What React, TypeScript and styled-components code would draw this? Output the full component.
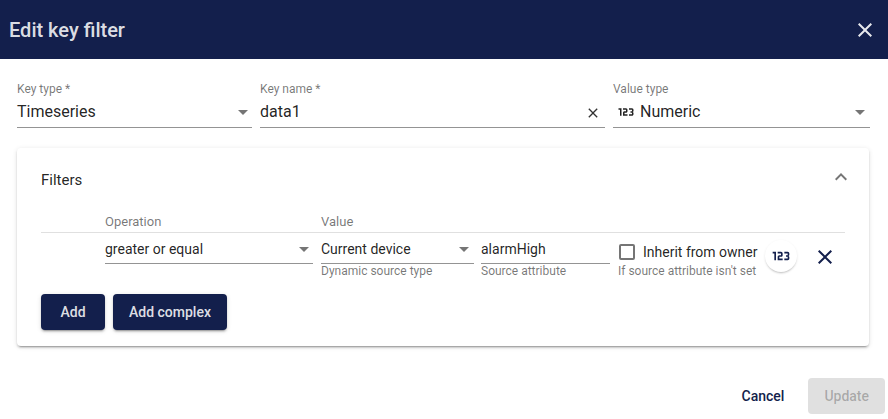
import React from "react";
import styled, { createGlobalStyle } from "styled-components";
import { MdArrowDropDown, MdClose, MdExpandLess } from "react-icons/md";

const navy = "#131f4c";

const GlobalStyle = createGlobalStyle`
  html, body {
    margin: 0;
    padding: 0;
    background: #fff;
    overflow: hidden;
  }
  body {
    font-family: Roboto, "Liberation Sans", sans-serif;
    color: rgba(0, 0, 0, 0.87);
  }
`;

const Dialog = styled.div`
  width: 888px;
  height: 419px;
  display: flex;
  flex-direction: column;
`;

const Header = styled.header`
  height: 59px;
  flex: none;
  background: ${navy};
  color: rgba(255, 255, 255, 0.87);
  display: flex;
  align-items: center;
  justify-content: space-between;
  padding: 0 11px 0 9px;
  font-size: 20px;
  font-weight: 500;
  svg {
    font-size: 24px;
    display: block;
    color: rgba(255, 255, 255, 0.9);
  }
`;

const TopFields = styled.div`
  display: grid;
  grid-template-columns: 235px 345px 257px;
  column-gap: 8px;
  padding: 23px 0 0 17px;
`;

const Field = styled.div`
  display: flex;
  flex-direction: column;
  min-width: 0;
`;

const TopLabel = styled.div`
  font-size: 12px;
  line-height: 14px;
  padding-bottom: 1px;
  color: rgba(0, 0, 0, 0.54);
`;

const TopControl = styled.div`
  height: 29px;
  padding-bottom: 1px;
  display: flex;
  align-items: center;
  border-bottom: 1px solid rgba(0, 0, 0, 0.42);
  font-size: 16px;
`;

const Grow = styled.span`
  flex: 1;
  min-width: 0;
  white-space: nowrap;
`;

const Caret = styled(MdArrowDropDown)<{ $inset?: number }>`
  flex: none;
  font-size: 24px;
  color: rgba(0, 0, 0, 0.54);
  margin-right: ${({ $inset }) => $inset ?? -3}px;
`;

const Clear = styled(MdClose)`
  flex: none;
  font-size: 16px;
  margin-right: 4px;
  margin-top: 2px;
  color: rgba(0, 0, 0, 0.8);
`;

const NumericGlyph = styled.svg<{ $size: number }>`
  flex: none;
  display: block;
  width: ${({ $size }) => $size}px;
  height: ${({ $size }) => $size}px;
  fill: currentColor;
`;

const NumericIcon = ({ size }: { size: number }) => (
  <NumericGlyph $size={size} viewBox="0 0 24 24">
    <path d="M4,17V9H2V7H6V17H4M22,15C22,16.11 21.1,17 20,17H16V15H20V13H18V11H20V9H16V7H20A2,2 0 0,1 22,9V10.5A1.5,1.5 0 0,1 20.5,12A1.5,1.5 0 0,1 22,13.5V15M14,15V17H8V13C8,11.89 8.9,11 10,11H12V9H8V7H12A2,2 0 0,1 14,9V11C14,12.11 13.1,13 12,13H10V15H14Z" />
  </NumericGlyph>
);

const ValueTypePrefix = styled.span`
  flex: none;
  margin: 0 5px 0 4px;
`;

const Card = styled.section`
  width: 852px;
  height: 198px;
  flex: none;
  box-sizing: border-box;
  margin: 20px 0 0 17px;
  padding: 0 24px;
  background: #fff;
  border-radius: 4px;
  box-shadow: 0 3px 1px -2px rgba(0, 0, 0, 0.2), 0 2px 2px 0 rgba(0, 0, 0, 0.14),
    0 1px 5px 0 rgba(0, 0, 0, 0.12);
  display: flex;
  flex-direction: column;
`;

const CardHead = styled.div`
  height: 64px;
  flex: none;
  display: flex;
  align-items: center;
  justify-content: space-between;
  font-size: 15px;
  svg {
    font-size: 24px;
    color: rgba(0, 0, 0, 0.54);
    margin: -6px -8px 0 0;
  }
`;

const FilterColumns = styled.div`
  display: grid;
  grid-template-columns: 208px 153px;
  column-gap: 8px;
  height: 21px;
  flex: none;
  width: 804px;
  box-sizing: border-box;
  padding-left: 64px;
  border-bottom: 1px solid rgba(0, 0, 0, 0.12);
  font-size: 13px;
  line-height: 20px;
  color: rgba(0, 0, 0, 0.54);
`;

const FilterRow = styled.div`
  display: flex;
  width: 804px;
  height: 61px;
  flex: none;
  box-sizing: border-box;
  padding-left: 64px;
  font-size: 14px;
`;

const RowField = styled.div<{ $width: number; $gap: number }>`
  width: ${({ $width }) => $width}px;
  margin-right: ${({ $gap }) => $gap}px;
  flex: none;
`;

const RowControl = styled.div`
  height: 28px;
  padding-top: 2px;
  display: flex;
  align-items: center;
  border-bottom: 1px solid rgba(0, 0, 0, 0.42);
`;

const Hint = styled.div`
  font-size: 12px;
  line-height: 14px;
  color: rgba(0, 0, 0, 0.54);
  white-space: nowrap;
`;

const InheritBox = styled.div`
  width: 147px;
  flex: none;
`;

const CheckLine = styled.div`
  height: 31px;
  display: flex;
  align-items: center;
  padding: 7px 0 0 1px;
  box-sizing: border-box;
  gap: 8px;
  white-space: nowrap;
`;

const CheckBox = styled.span`
  width: 16px;
  height: 16px;
  box-sizing: border-box;
  border: 2px solid rgba(0, 0, 0, 0.54);
  border-radius: 2px;
  flex: none;
`;

const TypeFab = styled.div`
  width: 32px;
  height: 32px;
  flex: none;
  margin: 7px 0 0 0;
  border-radius: 50%;
  background: #fff;
  color: ${navy};
  display: flex;
  align-items: center;
  justify-content: center;
  box-shadow: 0 2px 2px -1px rgba(0, 0, 0, 0.2), 0 1px 3px 0 rgba(0, 0, 0, 0.08);
`;

const Remove = styled(MdClose)`
  flex: none;
  font-size: 24px;
  color: ${navy};
  margin: 12px 0 0 16px;
`;

const Actions = styled.div`
  display: flex;
  gap: 8px;
`;

const Raised = styled.button`
  height: 36px;
  min-width: 64px;
  padding: 0 16px;
  border: none;
  border-radius: 4px;
  background: ${navy};
  color: rgba(255, 255, 255, 0.87);
  font: 500 14px Roboto, sans-serif;
  box-shadow: 0 3px 1px -2px rgba(0, 0, 0, 0.2), 0 2px 2px 0 rgba(0, 0, 0, 0.14),
    0 1px 5px 0 rgba(0, 0, 0, 0.12);
`;

const Footer = styled.footer`
  display: flex;
  justify-content: flex-end;
  align-items: center;
  gap: 8px;
  padding: 32px 3px 0 0;
`;

const FlatButton = styled.button<{ $disabled?: boolean }>`
  height: 36px;
  padding: 0 16px;
  border: none;
  border-radius: 4px;
  background: ${({ $disabled }) => ($disabled ? "#e0e0e0" : "transparent")};
  color: ${({ $disabled }) => ($disabled ? "rgba(0, 0, 0, 0.26)" : navy)};
  font: 500 14px Roboto, sans-serif;
`;

export default function App() {
  return (
    <>
      <GlobalStyle />
      <Dialog>
        <Header>
          <span>Edit key filter</span>
          <MdClose />
        </Header>
        <TopFields>
          <Field>
            <TopLabel>Key type *</TopLabel>
            <TopControl>
              <Grow>Timeseries</Grow>
              <Caret />
            </TopControl>
          </Field>
          <Field>
            <TopLabel>Key name *</TopLabel>
            <TopControl>
              <Grow>data1</Grow>
              <Clear />
            </TopControl>
          </Field>
          <Field>
            <TopLabel>Value type</TopLabel>
            <TopControl>
              <ValueTypePrefix>
                <NumericIcon size={18} />
              </ValueTypePrefix>
              <Grow>Numeric</Grow>
              <Caret $inset={-2} />
            </TopControl>
          </Field>
        </TopFields>
        <Card>
          <CardHead>
            <span>Filters</span>
            <MdExpandLess />
          </CardHead>
          <FilterColumns>
            <span>Operation</span>
            <span>Value</span>
          </FilterColumns>
          <FilterRow>
            <RowField $width={208} $gap={8}>
              <RowControl>
                <Grow>greater or equal</Grow>
                <Caret />
              </RowControl>
            </RowField>
            <RowField $width={153} $gap={7}>
              <RowControl>
                <Grow>Current device</Grow>
                <Caret $inset={-2} />
              </RowControl>
              <Hint>Dynamic source type</Hint>
            </RowField>
            <RowField $width={129} $gap={8}>
              <RowControl>
                <Grow>alarmHigh</Grow>
              </RowControl>
              <Hint>Source attribute</Hint>
            </RowField>
            <InheritBox>
              <CheckLine>
                <CheckBox />
                <span>Inherit from owner</span>
              </CheckLine>
              <Hint>If source attribute isn't set</Hint>
            </InheritBox>
            <TypeFab>
              <NumericIcon size={20} />
            </TypeFab>
            <Remove />
          </FilterRow>
          <Actions>
            <Raised>Add</Raised>
            <Raised>Add complex</Raised>
          </Actions>
        </Card>
        <Footer>
          <FlatButton>Cancel</FlatButton>
          <FlatButton $disabled>Update</FlatButton>
        </Footer>
      </Dialog>
    </>
  );
}
